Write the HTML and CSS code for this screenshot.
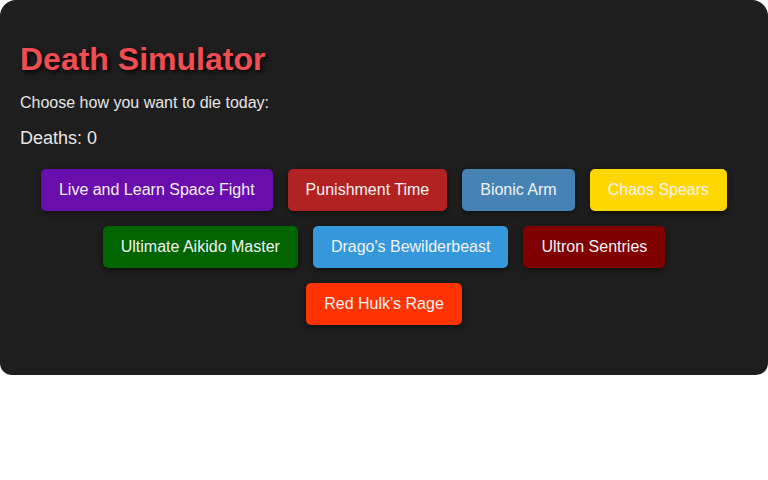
FILE: index.html
```html
<!DOCTYPE html>
<html>
<head lang="en">
    <meta charset="UTF-8">
    <title>Death Simulator</title>
    <link rel="stylesheet" href="styles.css">
</head>
<body>
<div class="game">
    <h1 class="game-title">Death Simulator</h1>
    <p class="game-intro">Choose how you want to die today:</p>
    <p id="counter" class="game-counter">Deaths: 0</p>
    <div class="death-list">
        <button class="death purple">Live and Learn Space Fight</button>
        <button class="death firebrick">Punishment Time</button>
        <button class="death steel">Bionic Arm</button>
        <button class="death gold">Chaos Spears</button>
        <button class="death green">Ultimate Aikido Master</button>
        <button class="death sky">Drago's Bewilderbeast</button>
        <button class="death maroon">Ultron Sentries</button>
        <button class="death orange">Red Hulk's Rage</button>
    </div>
</div>
<script>
    var deaths = 0;
    var counter = document.getElementById("counter");
    var btns = document.querySelectorAll(".death");
    for (var i = 0; i < btns.length; i++) {
        btns[i].onclick = function () {
            deaths++;
            counter.innerHTML = "Deaths: " + deaths;
        };
    }
</script>
</body>
</html>
```

FILE: styles.css
```css
body {
    margin: 0;
    font-family: "Liberation Sans", Arial, sans-serif;
    background: #ffffff;
}

.game {
    background: #1e1e1e;
    color: #e6e6e6;
    border-radius: 16px 16px 12px 12px;
    padding: 20px 20px 50px 20px;
}

.game-title {
    margin: 21px 0 0 0;
    font-size: 32px;
    color: #f04e52;
    text-shadow: 2px 2px 4px #000000;
}

.game-intro {
    margin: 16px 0 0 0;
    font-size: 16px;
}

.game-counter {
    margin: 16px 0 0 0;
    font-size: 18px;
}

.death-list {
    display: flex;
    flex-wrap: wrap;
    justify-content: center;
    gap: 15px;
    margin-top: 20px;
}

.death {
    font-family: "Liberation Sans", Arial, sans-serif;
    font-size: 16px;
    color: #f2f2f2;
    border: none;
    border-radius: 5px;
    padding: 12px 18px;
    box-shadow: 0 2px 6px rgba(0, 0, 0, 0.5);
    cursor: pointer;
}

.purple { background: #6a0dad; }
.firebrick { background: #b22222; }
.steel { background: #4682b4; }
.gold { background: #ffd700; }
.green { background: #006400; }
.sky { background: #3498db; }
.maroon { background: #800000; }
.orange { background: #ff3300; }
```
